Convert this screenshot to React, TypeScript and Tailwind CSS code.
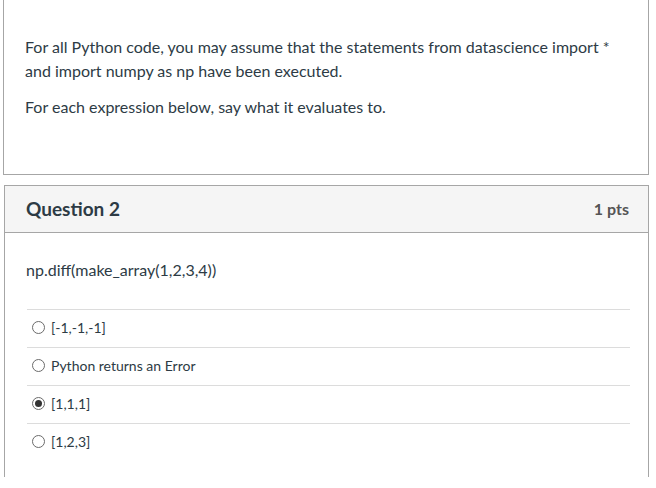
const answers = [
  { label: '[-1,-1,-1]', checked: false },
  { label: 'Python returns an Error', checked: false },
  { label: '[1,1,1]', checked: true },
  { label: '[1,2,3]', checked: false },
];

function Radio({ checked }: { checked: boolean }) {
  return (
    <span className="w-[13px] h-[13px] rounded-full border border-[#6b6b6b] bg-white flex items-center justify-center shrink-0">
      {checked && <span className="w-[7px] h-[7px] rounded-full bg-[#333]" />}
    </span>
  );
}

export default function App() {
  return (
    <div className="w-[656px] h-[488px] bg-white overflow-hidden text-[#2d3b45]" style={{ fontFamily: 'Lato, "Noto Sans", sans-serif' }}>
      {/* intro text */}
      <div className="ml-[3px] w-[646px] h-[175px] border-x border-b border-[#a6a6a6] pl-[21px] pr-4 pt-[35px]">
        <p className="text-[16px] leading-6">
          For all Python code, you may assume that the statements from datascience import *<br />
          and import numpy as np have been executed.
        </p>
        <p className="text-[16px] leading-6 mt-[12px]">For each expression below, say what it evaluates to.</p>
      </div>

      {/* question card */}
      <div className="ml-[4px] mt-[10px] w-[645px] h-[292px] border-x border-t border-[#a6a6a6]">
        <div className="h-[47px] bg-[#f5f5f5] border-b border-[#a6a6a6] flex items-center justify-between pl-[21px] pr-[19px]">
          <h2 className="text-[19px] font-bold text-[#2d3b45]">Question 2</h2>
          <span className="text-[16px] font-bold text-[#555]">1 pts</span>
        </div>
        <div className="pl-[21px] pr-[19px] pt-[25px]">
          <p className="text-[16px] leading-6 mb-[27px]">np.diff(make_array(1,2,3,4))</p>
          <div className="ml-[1px] w-[603px]">
            {answers.map((a) => (
              <div key={a.label} className="h-[38px] border-t border-[#dcdcdc] flex items-center gap-[6px] pl-[5px] pb-[3px]">
                <Radio checked={a.checked} />
                <span className="text-[14px]">{a.label}</span>
              </div>
            ))}
          </div>
        </div>
      </div>
    </div>
  );
}
